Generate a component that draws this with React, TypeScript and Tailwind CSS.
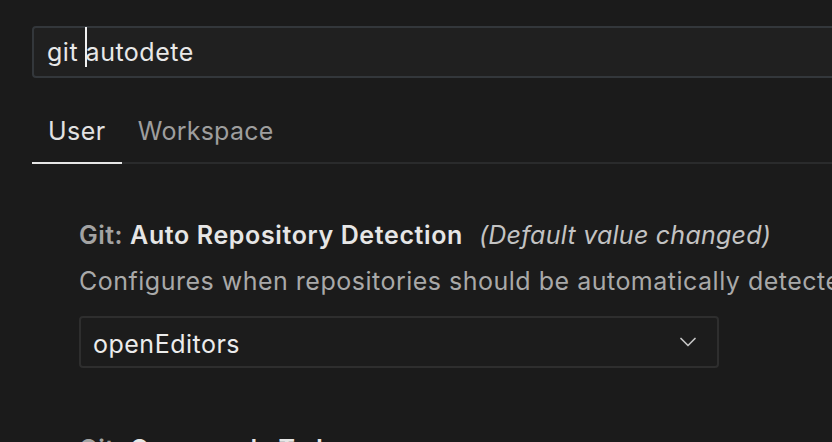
import React from "react";
import { ChevronDown } from "lucide-react";

const App = () => {
  return (
    <div className="w-[832px] h-[442px] overflow-hidden bg-[#1b1b1b] font-['Inter','Liberation_Sans',sans-serif] text-[25px] tracking-[0.02em] antialiased">
      <div className="pl-8 pt-[26px]">
        {/* Search box */}
        <div className="flex h-[52px] w-[900px] items-center rounded-[4px] border-2 border-[#33373b] bg-[#202020] pl-[13px]">
          <span className="leading-none text-[#e8e8e8]">
            git{" "}
            <span className="relative">
              <span className="absolute -left-[1px] -top-[10px] h-[40px] w-[2px] bg-[#f0f0f0]"></span>
            </span>
            autodete
          </span>
        </div>

        {/* Tabs */}
        <div className="mt-[26px] flex w-[900px] border-b-2 border-[#2a2b2c]">
          <div className="-mb-[2px] border-b-2 border-[#e6e6e6] px-4 pb-[19px] pt-[16px] leading-[23px] text-[#e2e2e2]">
            User
          </div>
          <div className="px-4 pb-[19px] pt-[16px] leading-[23px] tracking-[0.01em] text-[#9e9e9e]">
            Workspace
          </div>
        </div>
      </div>

      {/* Setting item */}
      <div className="pl-[79px] pt-[58px]">
        <div className="flex items-baseline whitespace-nowrap leading-[26px]">
          <span className="font-semibold text-[#a3a3a3]">Git:</span>
          <span className="ml-[7px] font-semibold tracking-[0.025em] text-[#e6e6e6]">Auto Repository Detection</span>
          <span className="ml-[16px] italic tracking-[0.01em] text-[#c3c3c3]">(Default value changed)</span>
        </div>
        <div className="mt-[20px] whitespace-nowrap leading-[26px] text-[#a9a9a9]">
          Configures when repositories should be automatically detected.
        </div>
        <div className="mt-[22px] flex h-[52px] w-[640px] items-center justify-between rounded-[4px] border-2 border-[#2e2e2e] bg-[#1c1c1c] pl-[12px] pr-[15px]">
          <span className="pt-[4px] leading-none text-[#ececec]">openEditors</span>
          <ChevronDown className="h-[28px] w-[28px] text-[#c5c5c5]" strokeWidth={1.5} />
        </div>
        <div className="mt-[68px] whitespace-nowrap leading-[26px]">
          <span className="font-semibold text-[#a3a3a3]">Git:</span>
          <span className="ml-[7px] font-semibold text-[#e6e6e6]">Commands To Log</span>
        </div>
      </div>
    </div>
  );
};

export default App;
